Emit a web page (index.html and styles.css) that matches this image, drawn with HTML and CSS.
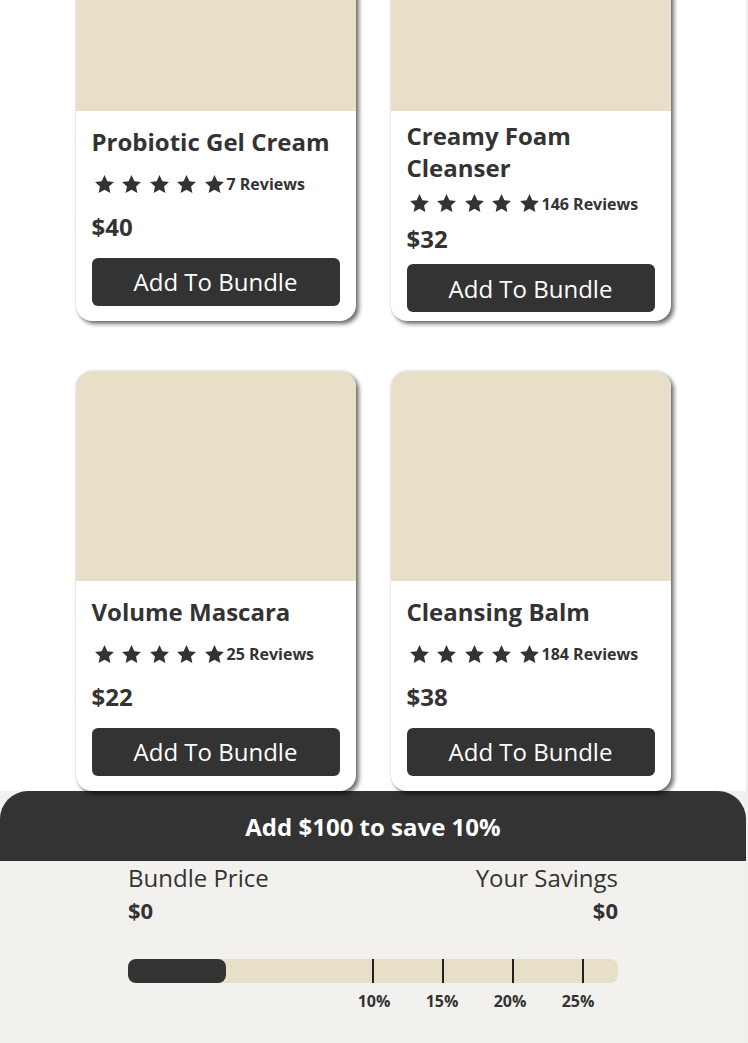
FILE: index.html
```html
<!DOCTYPE html>
<html>
<head>
    <title>Build Your Bundle</title>
    <link rel="stylesheet" href="styles.css">
</head>
<body>
    <svg width="0" height="0" class="defs">
        <symbol id="star" viewBox="0 0 24 24">
            <path d="M12 1.2l3.3 7 7.5.9-5.6 5.2 1.5 7.5L12 18l-6.7 3.8 1.5-7.5L1.2 9.1l7.5-.9z"/>
        </symbol>
    </svg>

    <div class="product-grid">
        <div class="product-card">
            <div class="product-image"></div>
            <div class="product-body">
                <h3 class="product-title">Probiotic Gel Cream</h3>
                <div class="rating">
                    <div class="stars">
                        <svg><use href="#star"/></svg><svg><use href="#star"/></svg><svg><use href="#star"/></svg><svg><use href="#star"/></svg><svg><use href="#star"/></svg>
                    </div>
                    <span>7 Reviews</span>
                </div>
                <div class="price">$40</div>
                <button class="button">Add To Bundle</button>
            </div>
        </div>

        <div class="product-card">
            <div class="product-image"></div>
            <div class="product-body">
                <h3 class="product-title">Creamy Foam Cleanser</h3>
                <div class="rating">
                    <div class="stars">
                        <svg><use href="#star"/></svg><svg><use href="#star"/></svg><svg><use href="#star"/></svg><svg><use href="#star"/></svg><svg><use href="#star"/></svg>
                    </div>
                    <span>146 Reviews</span>
                </div>
                <div class="price">$32</div>
                <button class="button">Add To Bundle</button>
            </div>
        </div>

        <div class="product-card">
            <div class="product-image"></div>
            <div class="product-body">
                <h3 class="product-title">Volume Mascara</h3>
                <div class="rating">
                    <div class="stars">
                        <svg><use href="#star"/></svg><svg><use href="#star"/></svg><svg><use href="#star"/></svg><svg><use href="#star"/></svg><svg><use href="#star"/></svg>
                    </div>
                    <span>25 Reviews</span>
                </div>
                <div class="price">$22</div>
                <button class="button">Add To Bundle</button>
            </div>
        </div>

        <div class="product-card">
            <div class="product-image"></div>
            <div class="product-body">
                <h3 class="product-title">Cleansing Balm</h3>
                <div class="rating">
                    <div class="stars">
                        <svg><use href="#star"/></svg><svg><use href="#star"/></svg><svg><use href="#star"/></svg><svg><use href="#star"/></svg><svg><use href="#star"/></svg>
                    </div>
                    <span>184 Reviews</span>
                </div>
                <div class="price">$38</div>
                <button class="button">Add To Bundle</button>
            </div>
        </div>
    </div>

    <div class="bundle-bar">
        <div class="bundle-header">Add $100 to save 10%</div>
        <div class="bundle-body">
            <div class="totals">
                <div class="total">
                    <div class="total-label">Bundle Price</div>
                    <div class="total-value">$0</div>
                </div>
                <div class="total right">
                    <div class="total-label">Your Savings</div>
                    <div class="total-value">$0</div>
                </div>
            </div>
            <div class="progress">
                <div class="progress-fill" style="width: 20%"></div>
                <span class="tick" style="left: 244px"></span>
                <span class="tick" style="left: 314px"></span>
                <span class="tick" style="left: 384px"></span>
                <span class="tick" style="left: 454px"></span>
            </div>
            <div class="progress-labels">
                <span style="left: 246px">10%</span>
                <span style="left: 314px">15%</span>
                <span style="left: 382px">20%</span>
                <span style="left: 450px">25%</span>
            </div>
        </div>
    </div>
</body>
</html>
```

FILE: styles.css
```css
html {
    background-color: #efefef;
}

body {
    font-family: "Open Sans", Arial, sans-serif;
    color: #333333;
    width: 746px;
    margin: 0;
    background-color: white;
    overflow: hidden;
}

.defs {
    position: absolute;
}

.product-grid {
    display: grid;
    grid-template-columns: 280px 280px;
    column-gap: 35px;
    row-gap: 50px;
    justify-content: center;
    margin-top: -99px;
}

.product-card {
    background-color: white;
    border-radius: 16px;
    overflow: hidden;
    box-shadow: 0 0 3px rgba(0, 0, 0, 0.15), 3px 3px 4px rgba(0, 0, 0, 0.55);
}

.product-image {
    height: 210px;
    background-color: #e8dfc9;
}

.product-body {
    height: 210px;
    padding: 0 16px;
    display: flex;
    flex-direction: column;
    justify-content: space-evenly;
}

.product-title {
    font-size: 24px;
    font-weight: 700;
    line-height: 32px;
    margin: 0;
}

.rating {
    display: flex;
    align-items: center;
    height: 22px;
}

.stars {
    display: flex;
    gap: 6.5px;
    margin-left: 2px;
    margin-right: 2px;
}

.stars svg {
    width: 21px;
    height: 21px;
    fill: #333333;
}

.rating span {
    font-size: 16px;
    font-weight: 700;
}

.price {
    font-size: 24px;
    font-weight: 700;
    line-height: 32px;
}

.button {
    font-family: "Open Sans", Arial, sans-serif;
    background-color: #333333;
    color: white;
    border: none;
    border-radius: 6px;
    height: 48px;
    font-size: 24px;
    cursor: pointer;
}

.bundle-bar {
    background-color: #f3f1ee;
    height: 252px;
}

.bundle-header {
    background-color: #333333;
    color: white;
    height: 70px;
    border-radius: 28px 28px 0 0;
    display: flex;
    align-items: center;
    justify-content: center;
    font-size: 24px;
    font-weight: 700;
}

.bundle-body {
    width: 490px;
    margin: 0 auto;
}

.totals {
    display: flex;
    justify-content: space-between;
}

.total.right {
    text-align: right;
}

.total-label {
    font-size: 24px;
    font-weight: 400;
    line-height: 34px;
}

.total-value {
    font-size: 22px;
    font-weight: 700;
    line-height: 30px;
}

.progress {
    position: relative;
    height: 24px;
    margin-top: 34px;
    background-color: #e8dfc9;
    border-radius: 8px;
}

.progress-fill {
    height: 100%;
    background-color: #333333;
    border-radius: 8px;
}

.tick {
    position: absolute;
    top: 0;
    width: 2px;
    height: 100%;
    background-color: #222222;
}

.progress-labels {
    position: relative;
    height: 34px;
}

.progress-labels span {
    position: absolute;
    top: 7px;
    transform: translateX(-50%);
    font-size: 16px;
    font-weight: 700;
}
```
